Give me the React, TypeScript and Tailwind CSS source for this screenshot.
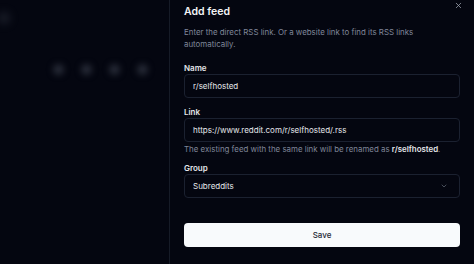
import { ChevronDown, X } from 'lucide-react';

const font = { fontFamily: 'Inter, "Noto Sans", sans-serif' };

function Field({ label, children, className = '' }: { label: string; children: React.ReactNode; className?: string }) {
  return (
    <div className={className}>
      <div className="text-[8px] leading-[10px] font-semibold text-[#e5e7eb]">{label}</div>
      <div className="mt-[1px] h-[24px] rounded-[4px] border border-[#1b2130] flex items-center px-[8px] text-[8px] text-[#e5e7eb]">
        {children}
      </div>
    </div>
  );
}

export default function App() {
  return (
    <div className="w-[474px] h-[264px] bg-[#040610] flex overflow-hidden" style={font}>
      {/* Blurred page behind the sheet */}
      <div className="flex-1 relative">
        <div className="absolute left-[-2px] top-[12px] w-[12px] h-[12px] rounded-full bg-[#2a2e3a] blur-[4px] opacity-60" />
        <div className="mt-[64px] ml-[53px] flex gap-[17px]">
          <div className="w-[11px] h-[11px] rounded-full bg-[#262a36] blur-[3px]" />
          <div className="w-[11px] h-[11px] rounded-full bg-[#262a36] blur-[3px]" />
          <div className="w-[11px] h-[11px] rounded-full bg-[#262a36] blur-[3px]" />
          <div className="w-[11px] h-[11px] rounded-full bg-[#262a36] blur-[3px]" />
        </div>
      </div>

      {/* Sheet */}
      <div className="relative w-[305px] border-l border-[#161b27] px-[14px] pt-[5px] flex flex-col">
        <button className="absolute right-[11px] top-[1px] text-[#a1a7b3]">
          <X size={9} strokeWidth={2} />
        </button>
        <h2 className="text-[10.5px] leading-[14px] font-semibold text-[#f3f4f6]">Add feed</h2>
        <p className="mt-[7px] text-[7.9px] leading-[12px] text-[#80879a] pr-[30px]">
          Enter the direct RSS link. Or a website link to find its RSS links automatically.
        </p>

        <Field label="Name" className="mt-[13px]">r/selfhosted</Field>
        <Field label="Link" className="mt-[9px]">https://www.reddit.com/r/selfhosted/.rss</Field>
        <p className="mt-[2px] text-[7.9px] leading-[10px] text-[#80879a] whitespace-nowrap">
          The existing feed with the same link will be renamed as{' '}
          <span className="font-semibold text-[#e5e7eb]">r/selfhosted</span>.
        </p>
        <Field label="Group" className="mt-[9px]">
          <span className="flex-1">Subreddits</span>
          <ChevronDown size={8} className="text-[#6b7280] mr-[3px]" />
        </Field>

        <button className="mt-[25px] h-[24px] rounded-[4px] bg-[#f8fafc] text-[#1f2937] text-[8px] font-medium">
          Save
        </button>
      </div>
    </div>
  );
}
